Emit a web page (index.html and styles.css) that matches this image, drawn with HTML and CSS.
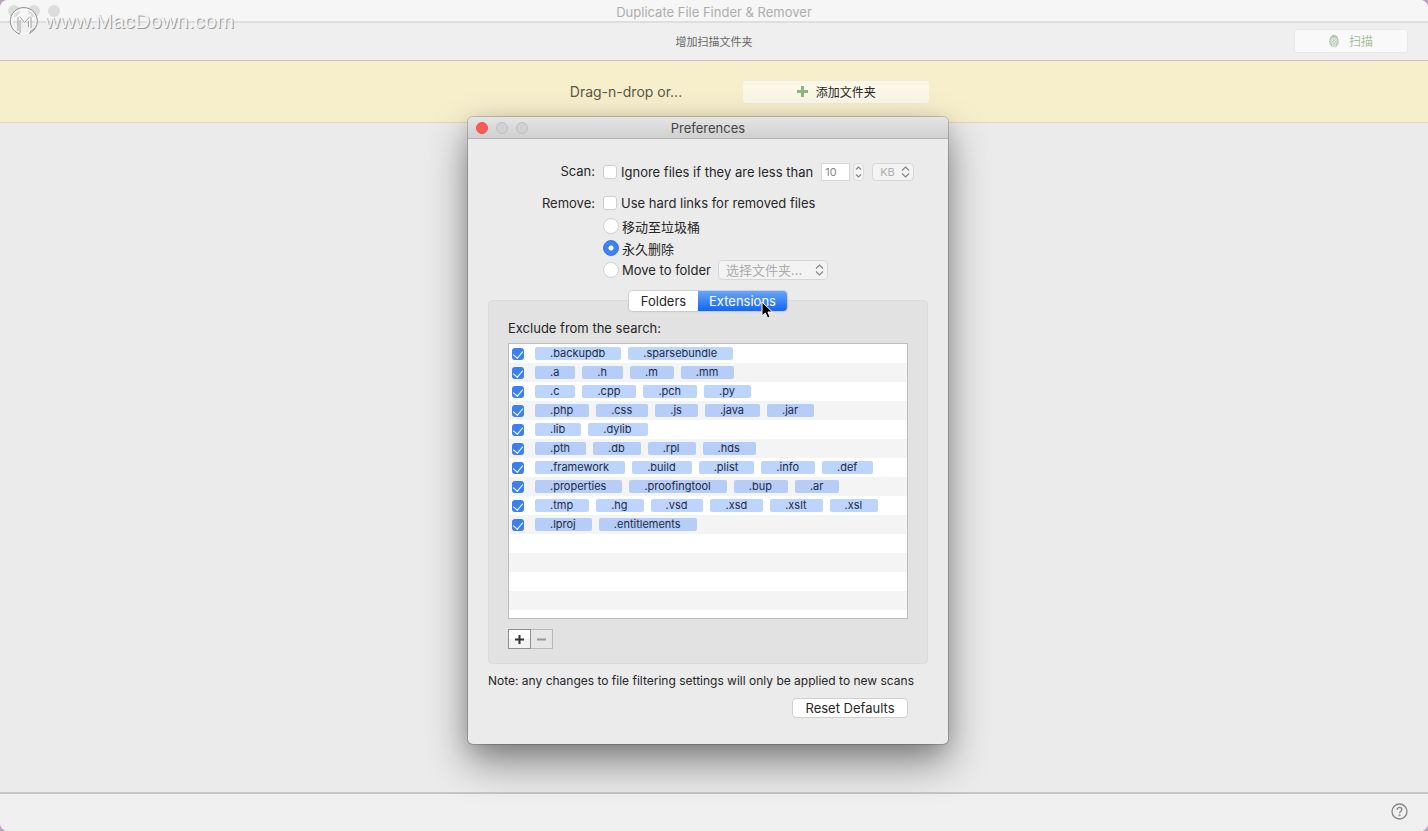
FILE: index.html
```html
<!DOCTYPE html>
<html lang="zh-CN">
<head>
  <meta charset="UTF-8">
  <title>Duplicate File Finder &amp; Remover</title>
  <link rel="stylesheet" href="styles.css">
</head>
<body>

  <div class="app">
    <header class="titlebar">Duplicate File Finder &amp; Remover
      <span class="dots"><i></i><i></i><i></i></span>
    </header>

    <div class="toolbar">
      <span></span>
      <span class="toolbar-title">增加扫描文件夹</span>
      <button class="flat-btn scan-btn">
        <svg width="10" height="14" viewBox="0 0 10 14" fill="none" stroke="currentColor" stroke-width="0.9">
          <path d="M1 3.500Q5-1 9 3.500M.6 6Q5-1.500 9.400 6M.6 8.500Q1 3 5 3T9.400 8.500M1 11Q1.500 4.800 5 4.800T9 11M2.300 12.500Q2.500 6.500 5 6.500T7.700 12.500M4 13.400Q3.700 8.500 5 8.500T6 13.400"/>
        </svg>
        扫描
      </button>
    </div>

    <div class="drop-bar">
      <span class="drop-text">Drag-n-drop or...</span>
      <button class="flat-btn add-btn">
        <svg width="11" height="11" viewBox="0 0 11 11"><path d="M4 0h3v4h4v3H7v4H4V7H0V4h4z" fill="#8db582"/></svg>
        添加文件夹
      </button>
    </div>

    <main class="content"></main>

    <footer class="statusbar">
      <button class="help" aria-label="Help">
        <svg width="17" height="17" viewBox="0 0 17 17" fill="none" stroke="#858585" stroke-width="1.300">
          <circle cx="8.500" cy="8.500" r="7.500"/>
          <path d="M6.200 6.800C6.200 3.600 10.900 3.800 10.900 6.600C10.900 8.200 8.600 8.300 8.600 10.300"/>
          <circle cx="8.600" cy="12.300" r=".4"/>
        </svg>
      </button>
    </footer>
  </div>

  <div class="watermark">
    <svg width="30" height="30" viewBox="0 0 30 30" fill="none">
      <circle cx="15" cy="15" r="12.500" stroke="#f8f8f8" stroke-width="2"/>
      <path d="M11 28A13.500 13.500 0 1 1 20 27.500" stroke="#8a8a8a"/>
      <path d="M10 26V10l5.500 6L21 10v11" stroke="#f8f8f8" stroke-width="2"/>
      <path d="M9 25V11M11 14v13M10.500 10.500l5 6 5.500-6M22 11v11M19.500 15v6" stroke="#8a8a8a" stroke-width=".8"/>
      <path d="M21 26l5-4" stroke="#8a8a8a"/>
    </svg>
    <span>www.MacDown.com</span>
  </div>

  <div class="dialog" role="dialog" aria-labelledby="dialogTitle">
    <div class="dialog-bar">
      <div class="lights">
        <button class="light close" aria-label="Close"></button>
        <button class="light" aria-label="Minimize" disabled></button>
        <button class="light" aria-label="Zoom" disabled></button>
      </div>
      <span id="dialogTitle">Preferences</span>
    </div>

    <form class="dialog-body">
      <div class="settings">
        <span class="name">Scan:</span>
        <div class="line">
          <input type="checkbox" class="check" id="ignore">
          <label for="ignore">Ignore files if they are less than</label>
          <input type="text" class="size" value="10" aria-label="Size" disabled>
          <span class="stepper">
            <button type="button" aria-label="Increase" disabled><svg width="7" height="4" viewBox="0 0 7 4"><path d="M1 3.500l2.500-2.500L6 3.500"/></svg></button>
            <button type="button" aria-label="Decrease" disabled><svg width="7" height="4" viewBox="0 0 7 4"><path d="M1 .5l2.500 2.500L6 .5"/></svg></button>
          </span>
          <span class="select unit">
            <select aria-label="Unit" disabled><option>KB</option></select>
            <svg width="9" height="12" viewBox="0 0 9 12"><path d="M1 4.500L4.500 1 8 4.500M1 7.500L4.500 11 8 7.500"/></svg>
          </span>
        </div>

        <span class="name remove">Remove:</span>
        <div class="line remove">
          <input type="checkbox" class="check" id="hard">
          <label for="hard">Use hard links for removed files</label>
        </div>

        <div class="line radio-line">
          <input type="radio" class="radio" name="remove" id="trash">
          <label for="trash">移动至垃圾桶</label>
        </div>
        <div class="line radio-line">
          <input type="radio" class="radio" name="remove" id="forever" checked>
          <label for="forever">永久删除</label>
        </div>
        <div class="line radio-line">
          <input type="radio" class="radio" name="remove" id="move">
          <label for="move">Move to folder</label>
          <span class="select folder">
            <select aria-label="Folder" disabled><option>选择文件夹...</option></select>
            <svg width="9" height="12" viewBox="0 0 9 12"><path d="M1 4.500L4.500 1 8 4.500M1 7.500L4.500 11 8 7.500"/></svg>
          </span>
        </div>
      </div>

      <div class="tabs" role="tablist">
        <button type="button" class="tab" role="tab">Folders</button>
        <button type="button" class="tab active" role="tab" aria-selected="true">Extensions
          <svg class="pointer" width="13" height="19" viewBox="0 0 13 19"><path d="M1 1v14l3.300-3.100 2.300 5.300 2.500-1.100-2.200-5.100H11.500z" fill="#000" stroke="#fff" stroke-width="1"/></svg>
        </button>
      </div>

      <div class="panel">
        <p class="panel-label">Exclude from the search:</p>
        <div class="list">
          <table class="ext-table">
            <tbody id="extRows"></tbody>
          </table>
        </div>
        <div class="list-buttons">
          <button type="button" aria-label="Add"><svg width="9" height="9" viewBox="0 0 9 9"><path d="M4.500 0v9M0 4.500h9" stroke="#333" stroke-width="2"/></svg></button>
          <button type="button" aria-label="Remove" disabled><svg width="9" height="9" viewBox="0 0 9 9"><path d="M0 4.500h9" stroke="#999" stroke-width="2"/></svg></button>
        </div>
      </div>

      <p class="note">Note: any changes to file filtering settings will only be applied to new scans</p>
      <button type="button" class="reset">Reset Defaults</button>
    </form>
  </div>

  <script src="script.js"></script>
</body>
</html>
```
FILE: styles.css
```css
* {
  box-sizing: border-box;
}

body {
  margin: 0;
  background: #b9a3bd;
  font-family: Inter, 'Noto Sans CJK SC', sans-serif;
  font-size: 13px;
  color: #262626;
}

button, input, select {
  font: inherit;
  color: inherit;
  margin: 0;
}

p {
  margin: 0;
}

.app {
  min-height: 100vh;
  display: flex;
  flex-direction: column;
  background: #ebebeb;
  border-radius: 8px;
  overflow: hidden;
}

.titlebar {
  position: relative;
  height: 23px;
  line-height: 24px;
  text-align: center;
  background: #f6f6f6;
  border-bottom: 2px solid #dedede;
  color: #adadad;
}

.dots {
  position: absolute;
  left: 8px;
  top: 5px;
  display: flex;
  gap: 8px;
}

.dots i {
  width: 12px;
  height: 12px;
  border-radius: 50%;
  background: #dcdcdc;
}

.toolbar {
  height: 38px;
  display: grid;
  grid-template-columns: 1fr auto 1fr;
  align-items: center;
  padding: 0 20px 2px;
  background: #efefef;
  border-bottom: 1px solid #c8c2ba;
}

.toolbar-title {
  font-size: 11px;
  color: #666;
}

.flat-btn {
  display: flex;
  align-items: center;
  justify-content: center;
  height: 24px;
  border: 1px solid #e8e8e8;
  border-radius: 3px;
  font-size: 12px;
}

.scan-btn {
  justify-self: end;
  width: 114px;
  gap: 10px;
  background: #f9f9f9;
  color: #a2bf9e;
}

.drop-bar {
  height: 62px;
  display: flex;
  align-items: center;
  justify-content: center;
  gap: 60px;
  padding-left: 72px;
  background: #f7efcc;
  border-bottom: 1px solid #ddd8c8;
}

.drop-text {
  font-size: 14px;
  color: #5b5746;
}

.add-btn {
  width: 188px;
  gap: 8px;
  background: #fbf7e8;
  border-color: #f3ecd2;
}

.content {
  flex: 1;
}

.statusbar {
  height: 39px;
  display: flex;
  align-items: center;
  justify-content: flex-end;
  padding: 0 20px 2px;
  background: #f0f0f0;
  border-top: 2px solid #c6c6c6;
}

.help {
  display: flex;
  padding: 0;
  border: none;
  background: none;
}

.watermark {
  position: absolute;
  left: 9px;
  top: 6px;
  display: flex;
  align-items: center;
  gap: 6px;
  font: 21px/30px 'Liberation Sans', sans-serif;
  color: #f4f4f4;
  text-shadow: 1px 1px 0 #9a9a9a;
}

/* preferences window */
.dialog {
  position: absolute;
  top: 117px;
  left: calc(50% - 246px);
  width: 480px;
  background: #ebebeb;
  border-radius: 5px;
  box-shadow: 0 0 0 1px rgba(0, 0, 0, 0.18), 0 18px 40px rgba(0, 0, 0, 0.45), 0 4px 20px rgba(0, 0, 0, 0.1);
}

.dialog-bar {
  display: grid;
  grid-template-columns: 1fr auto 1fr;
  align-items: center;
  height: 22px;
  padding: 0 8px;
  border-radius: 5px 5px 0 0;
  border-bottom: 1px solid #b5b5b5;
  background: linear-gradient(#e5e5e5, #d0d0d0);
  color: #444;
}

.lights {
  display: flex;
  gap: 8px;
}

.light {
  width: 12px;
  height: 12px;
  padding: 0;
  border: 1px solid #bebebe;
  border-radius: 50%;
  background: #d2d2d2;
}

.light.close {
  border-color: #ee5048;
  background: #fc5b55;
}

.dialog-body {
  display: flex;
  flex-direction: column;
  padding: 22px 20px 26px;
}

.settings {
  display: grid;
  grid-template-columns: 107px 1fr;
  column-gap: 8px;
  row-gap: 2px;
}

.name {
  line-height: 20px;
  text-align: right;
}

.line {
  grid-column: 2;
  display: flex;
  align-items: center;
  height: 22px;
}

.remove {
  margin-top: 7px;
}

.name.remove {
  line-height: 22px;
}

.radio-line {
  height: 20px;
}

.check, .radio {
  appearance: none;
  width: 14px;
  height: 14px;
  flex: none;
  border: 1px solid #cfcfcf;
  border-radius: 3px;
  background: #fff;
}

.line .check {
  margin-right: 4px;
}

.radio {
  width: 16px;
  height: 16px;
  margin-right: 3px;
  border-radius: 50%;
}

.radio:checked {
  border-color: #3576e8;
  background: radial-gradient(circle, #fff 0 2px, #3d82f4 3px);
}

.size {
  width: 29px;
  height: 18px;
  margin-left: 8px;
  padding: 0 3px;
  border: 1px solid #d6d6d6;
  background: #fff;
  font-size: 11px;
  color: #888;
}

.stepper {
  display: flex;
  flex-direction: column;
  margin-left: 3px;
  border: 1px solid #dcdcdc;
  border-radius: 4px;
  background: #f4f4f4;
}

.stepper button {
  display: flex;
  align-items: center;
  width: 9px;
  height: 8px;
  padding: 0 1px;
  border: none;
  background: none;
}

.stepper path, .select path {
  fill: none;
  stroke: #858585;
  stroke-width: 1.2;
}

.select {
  display: flex;
  align-items: center;
  border: 1px solid #d6d6d6;
  border-radius: 4px;
  background: #f3f3f3;
}

.select select {
  appearance: none;
  width: 100%;
  height: 16px;
  padding: 0 0 0 7px;
  border: none;
  background: none;
  opacity: 1;
  color: #adadad;
}

.select svg {
  flex: none;
  margin-right: 3px;
}

.unit {
  width: 42px;
  height: 18px;
  margin-left: 8px;
  font-size: 11px;
}

.folder {
  width: 110px;
  height: 20px;
  margin-left: 7px;
}

.folder select {
  height: 18px;
}

.tabs {
  position: relative;
  z-index: 1;
  display: flex;
  align-self: center;
  margin-top: 11px;
  border-radius: 4px;
  box-shadow: 0 0 1px 1px rgba(0, 0, 0, 0.12);
}

.tab {
  width: 69px;
  height: 20px;
  padding: 0;
  border: none;
  border-radius: 4px 0 0 4px;
  background: #fff;
}

.tab.active {
  position: relative;
  width: 89px;
  border-radius: 0 4px 4px 0;
  background: linear-gradient(#69a5fa, #1166f5);
  color: #fff;
}

.pointer {
  position: absolute;
  left: 63px;
  top: 10px;
}

.panel {
  margin-top: -11px;
  padding: 17px 19px 14px;
  border: 1px solid #dadada;
  border-radius: 4px;
  background: #e2e2e2;
}

.panel-label {
  line-height: 20px;
}

.list {
  min-height: 276px;
  margin-top: 5px;
  border: 1px solid #bdbdbd;
  background: repeating-linear-gradient(#fff 0 19px, #f4f4f4 19px 38px);
}

.ext-table {
  border-collapse: collapse;
}

.ext-table td {
  height: 19px;
  padding: 0;
}

.ext-table .check {
  display: flex;
  justify-content: center;
  width: 12px;
  height: 12px;
  margin: 0 11px 0 3px;
  border: none;
  background: #3a80f2;
}

.ext-table .check:checked::before {
  content: "";
  width: 5px;
  height: 8px;
  margin-top: 1px;
  border: solid #fff;
  border-width: 0 1px 1px 0;
  transform: rotate(40deg);
}

.tags {
  display: flex;
  gap: 7px;
}

.tag {
  height: 13px;
  line-height: 13px;
  padding: 0 16px 0 15px;
  border-radius: 2px;
  background: #bdd4fc;
  font-size: 11px;
  color: #1c2b48;
}

tr:nth-child(even) .tag {
  background: #b5cdf7;
}

.list-buttons {
  display: flex;
  margin-top: 10px;
}

.list-buttons button {
  display: flex;
  align-items: center;
  justify-content: center;
  width: 23px;
  height: 20px;
  padding: 0;
  border: 1px solid #8f8f8f;
  background: linear-gradient(#fff 50%, #f3f3f3 50%);
}

.list-buttons button:disabled {
  width: 22px;
  border-color: #b9b9b9;
  border-left: none;
  background: #e6e6e6;
}

.note {
  margin-top: 8px;
  font-size: 12px;
  line-height: 18px;
  white-space: nowrap;
}

.reset {
  align-self: flex-end;
  width: 116px;
  height: 20px;
  margin: 8px 20px 0 0;
  padding: 0;
  border: 1px solid #cfcfcf;
  border-radius: 4px;
  background: #fff;
}
```
FILE: script.js
```js
const groups = [
  ['.backupdb', '.sparsebundle'],
  ['.a', '.h', '.m', '.mm'],
  ['.c', '.cpp', '.pch', '.py'],
  ['.php', '.css', '.js', '.java', '.jar'],
  ['.lib', '.dylib'],
  ['.pth', '.db', '.rpl', '.hds'],
  ['.framework', '.build', '.plist', '.info', '.def'],
  ['.properties', '.proofingtool', '.bup', '.ar'],
  ['.tmp', '.hg', '.vsd', '.xsd', '.xslt', '.xsl'],
  ['.lproj', '.entitlements']
];

const extRows = document.getElementById('extRows');

groups.forEach(group => {
  const row = document.createElement('tr');
  const tags = group.map(ext => `<span class="tag">${ext}</span>`).join('');
  row.innerHTML = `
    <td><input type="checkbox" class="check" aria-label="${group.join(' ')}" checked></td>
    <td><div class="tags">${tags}</div></td>`;
  extRows.appendChild(row);
});
```
